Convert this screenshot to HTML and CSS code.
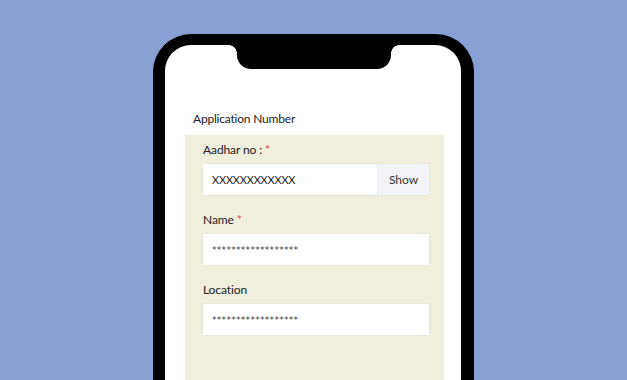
FILE: index.html
```html
<!DOCTYPE html>
<html lang="en">
<head>
  <meta charset="UTF-8">
  <meta name="viewport" content="width=device-width, initial-scale=1.0">
  <title>Aadhar Form</title>
  <link rel="stylesheet" href="styles.css">
</head>
<body>
  <div class="phone">
    <div class="notch"></div>
    <div class="screen">
      <p class="app-no">Application Number</p>
      <form class="panel">
        <div class="field">
          <label class="field-label">Aadhar no : <span class="req">*</span></label>
          <div class="input-box">
            <span class="input-value">XXXXXXXXXXXX</span>
            <span class="show-btn">Show</span>
          </div>
        </div>
        <div class="field">
          <label class="field-label">Name <span class="req">*</span></label>
          <div class="input-box">
            <span class="input-value masked">******************</span>
          </div>
        </div>
        <div class="field">
          <label class="field-label">Location</label>
          <div class="input-box">
            <span class="input-value masked">******************</span>
          </div>
        </div>
      </form>
    </div>
  </div>
</body>
</html>
```

FILE: styles.css
```css
body {
  margin: 0;
  padding: 0;
  background-color: #8a9fd4;
  font-family: Lato, "Open Sans", sans-serif;
  overflow: hidden;
  height: 380px;
}

.phone {
  position: relative;
  width: 296px;
  height: 400px;
  margin: 34px auto 0;
  border: 12px solid #000;
  border-top-width: 11px;
  border-right-width: 13px;
  border-radius: 38px 38px 0 0;
  border-bottom: none;
  background-color: #000;
}

.notch {
  position: absolute;
  top: -11px;
  left: 72px;
  width: 154px;
  height: 35px;
  background-color: #000;
  border-radius: 0 0 14px 14px;
  z-index: 2;
}

/* little flares where the notch meets the frame */
.notch::before,
.notch::after {
  content: "";
  position: absolute;
  top: 11px;
  width: 8px;
  height: 8px;
}

.notch::before {
  left: -8px;
  background: radial-gradient(circle at 0 100%, transparent 7.5px, #000 8px);
}

.notch::after {
  right: -8px;
  background: radial-gradient(circle at 100% 100%, transparent 7.5px, #000 8px);
}

.screen {
  height: 100%;
  background-color: #fff;
  border-radius: 26px 26px 0 0;
  padding-top: 66px;
  box-sizing: border-box;
}

.app-no {
  margin: 0 0 8px 28px;
  font-size: 12px;
  line-height: 16px;
  letter-spacing: -0.2px;
  color: #222;
}

.panel {
  margin: 0 17px 0 20px;
  padding: 7px 15px 0 18px;
  height: 300px;
  background-color: #f0eedd;
}

.field {
  margin-bottom: 17px;
}

.field-label {
  display: block;
  margin-bottom: 6px;
  font-size: 12px;
  line-height: 16px;
  letter-spacing: -0.1px;
  color: #222;
}

.req {
  color: #e8474f;
}

.input-box {
  display: flex;
  align-items: stretch;
  height: 31px;
  background-color: #fff;
  box-shadow: 0 0 2px rgba(0, 0, 0, 0.08);
}

.input-value {
  flex: 1;
  display: flex;
  align-items: center;
  padding-left: 9px;
  font-size: 11px;
  letter-spacing: -0.2px;
  color: #222;
}

.input-value.masked {
  font-family: "DejaVu Sans", sans-serif;
  font-size: 9px;
  letter-spacing: 0.3px;
  color: #444;
}

.show-btn {
  display: flex;
  align-items: center;
  justify-content: center;
  width: 51px;
  font-size: 12px;
  color: #333;
  background-color: #f3f3f7;
  border-left: 1px solid #ececf0;
}
```
